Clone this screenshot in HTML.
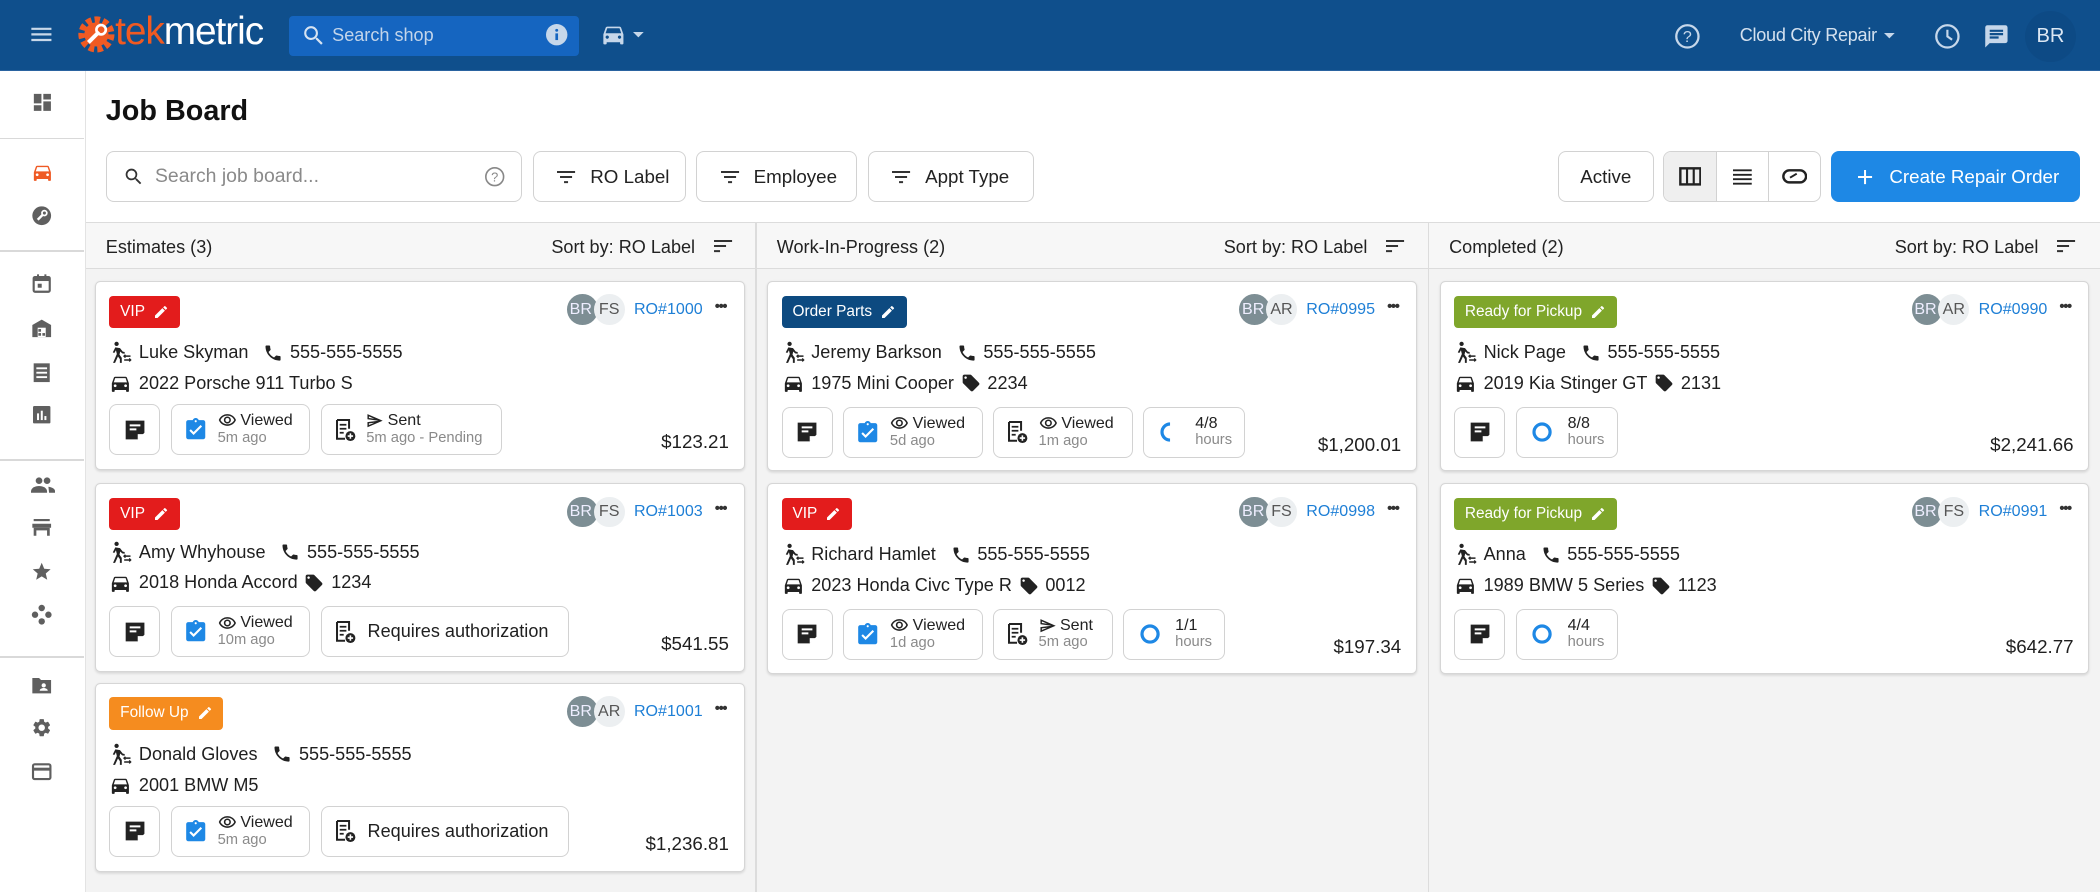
<!DOCTYPE html>
<html><head><meta charset="utf-8">
<style>
*{box-sizing:border-box;margin:0;padding:0}
html,body{width:2100px;height:892px;overflow:hidden;background:#fff}
#root{zoom:1.33929;width:1568px;height:666px;position:relative;font-family:"Liberation Sans",sans-serif;color:#1f1f1f;font-size:14px}
.hdr{position:absolute;left:0;top:0;width:1568px;height:53px;background:#0f4f8c;border-bottom:1px solid #2a63a0}
.abs{position:absolute}
svg{display:block;flex:none}
.side{position:absolute;left:0;top:53px;width:64px;height:613px;background:#fff;border-right:1px solid #e3e3e3}
.side .dv{position:absolute;left:0;width:63px;height:1px;background:#d9d9d9}
.side svg{position:absolute;left:23px}
.btn{position:absolute;top:113px;height:38px;border:1px solid #d2d2d2;border-radius:6px;background:#fff;display:flex;align-items:center;font-size:14px;color:#222;white-space:nowrap}
.colh{position:absolute;top:166px;height:35px;background:#f7f7f7;border-top:1px solid #dcdcdc;border-bottom:1px solid #dcdcdc;font-size:13.5px;color:#222}
.colb{position:absolute;top:201px;height:465px;background:#f3f3f3}
.vl{position:absolute;top:166px;height:500px;width:1px;background:#dcdcdc}
.card{position:absolute;width:485px;background:#fff;border:1px solid #d6d6d6;border-radius:4px;box-shadow:0 1px 2px rgba(0,0,0,.12)}
.tag{position:absolute;left:10px;top:10px;height:24px;border-radius:3px;color:#fff;font-size:11.5px;display:flex;align-items:center;padding:0 8px;gap:6px;white-space:nowrap}
.vip{background:#e31c1c}.op{background:#0d4a80}.rp{background:#7fa62b}.fu{background:#f58c1f}
.avs{position:absolute;top:9px;right:13px;display:flex;align-items:center}
.av{width:23px;height:23px;border-radius:50%;font-size:12px;display:flex;align-items:center;justify-content:center;color:#555}
.av.b{background:#7d8e94;color:#eef;overflow:hidden;justify-content:flex-start;padding-left:2px}
.av.f{background:#eceff1;margin-left:-3px}
.ro{color:#1e7fd6;font-size:12px;margin-left:7px}
.dots{margin-left:9px;font-weight:bold;font-size:11px;letter-spacing:-1px;color:#333;position:relative;top:-2px}
.ln{position:absolute;left:10px;display:flex;align-items:center;font-size:13.5px;color:#1f1f1f;gap:5px;white-space:nowrap}
.chips{position:absolute;left:10px;top:91px;display:flex;gap:8px}
.chip{height:38px;border:1px solid #d2d2d2;border-radius:6px;display:flex;align-items:center;padding:0 8px;gap:7px;background:#fff;white-space:nowrap;overflow:hidden}
.chip.n{width:38px;justify-content:center;padding:0}
.t1{font-size:12px;color:#222;display:flex;align-items:center;gap:3px;line-height:13px}
.t2{font-size:11px;color:#8a8a8a;line-height:13px}
.price{position:absolute;right:11px;top:111px;font-size:14px;color:#1f1f1f}
</style></head><body><div id="root">

<div class="hdr">
 <svg class="abs" style="left:21px;top:16px" width="20" height="20" viewBox="0 0 24 24"><path fill="#c9d9ea" d="M3 18h18v-2H3v2zm0-5h18v-2H3v2zm0-7v2h18V6H3z"/></svg>
 <svg class="abs" style="left:56px;top:10px" width="32" height="32" viewBox="0 0 32 32"><circle cx="16" cy="16" r="11" fill="none" stroke="#f05a22" stroke-width="5" stroke-dasharray="4 2.3"/><circle cx="16" cy="16" r="9" fill="#f05a22"/><path d="M10 22l8-8" stroke="#fff" stroke-width="3"/><circle cx="19.5" cy="12.5" r="3.5" fill="none" stroke="#fff" stroke-width="2"/></svg>
 <div class="abs" style="left:86px;top:7px;font-size:29px;letter-spacing:-0.8px;line-height:34px"><span style="color:#f05a22">tek</span><span style="color:#fff">metric</span></div>
 <div class="abs" style="left:216px;top:12px;width:216px;height:30px;background:#1565c0;border-radius:3px"></div>
 <svg class="abs" style="left:225px;top:17px" width="19" height="19" viewBox="0 0 24 24"><path fill="#d6e3f2" d="M15.5 14h-.79l-.28-.27A6.47 6.47 0 0016 9.5 6.5 6.5 0 109.5 16c1.61 0 3.09-.59 4.23-1.57l.27.28v.79l5 4.99L20.49 19l-4.99-5zm-6 0C7.01 14 5 11.990 5 9.5S7.01 5 9.5 5 14 7.01 14 9.5 11.99 14 9.5 14z"/></svg>
 <div class="abs" style="left:248px;top:19px;color:#c3d5ea;font-size:13.5px">Search shop</div>
 <svg class="abs" style="left:408px;top:18px" width="16" height="16" viewBox="0 0 16 16"><circle cx="8" cy="8" r="8" fill="#c6d7ea"/><rect x="7" y="7" width="2" height="5" fill="#1565c0"/><circle cx="8" cy="4.7" r="1.1" fill="#1565c0"/></svg>
 <svg class="abs" style="left:448px;top:16px" width="20" height="20" viewBox="0 0 24 24"><path fill="#c6d7ea" d="M18.92 6.01C18.72 5.42 18.16 5 17.5 5h-11c-.66 0-1.21.42-1.42 1.01L3 12v8c0 .55.45 1 1 1h1c.55 0 1-.45 1-1v-1h12v1c0 .55.45 1 1 1h1c.55 0 1-.45 1-1v-8l-2.08-5.99zM6.5 16c-.83 0-1.5-.67-1.5-1.5S5.67 13 6.5 13s1.5.67 1.5 1.5S7.33 16 6.5 16zm11 0c-.83 0-1.5-.67-1.5-1.5s.67-1.5 1.5-1.5 1.5.67 1.5 1.5-.67 1.5-1.5 1.5zM5 11l1.5-4.5h11L19 11H5z"/></svg>
 <svg class="abs" style="left:473px;top:24px" width="8" height="5" viewBox="0 0 8 5"><path d="M0 0h8L4 4z" fill="#c6d7ea"/></svg>
 <svg class="abs" style="left:1250px;top:17px" width="20" height="20" viewBox="0 0 20 20"><circle cx="10" cy="10" r="8.3" fill="none" stroke="#c6d7ea" stroke-width="1.7"/><text x="10" y="14.3" text-anchor="middle" font-size="12" font-family="Liberation Sans" fill="#c6d7ea">?</text></svg>
 <div class="abs" style="left:1299px;top:19px;color:#d4e1ef;font-size:13.5px;letter-spacing:-0.2px">Cloud City Repair</div>
 <svg class="abs" style="left:1407px;top:25px" width="8" height="5" viewBox="0 0 8 5"><path d="M0 0h8L4 4z" fill="#c6d7ea"/></svg>
 <svg class="abs" style="left:1444px;top:17px" width="20" height="20" viewBox="0 0 20 20"><circle cx="10" cy="10" r="8.3" fill="none" stroke="#c6d7ea" stroke-width="1.7"/><path d="M10 5v5l3.5 2.5" fill="none" stroke="#c6d7ea" stroke-width="1.6"/></svg>
 <svg class="abs" style="left:1481px;top:17px" width="20" height="20" viewBox="0 0 24 24"><path fill="#c6d7ea" d="M20 2H4c-1.1 0-1.99.9-1.99 2L2 22l4-4h14c1.1 0 2-.9 2-2V4c0-1.1-.9-2-2-2zM6 9h12v2H6V9zm8 5H6v-2h8v2zm4-6H6V6h12v2z"/></svg>
 <div class="abs" style="left:1512px;top:8px;width:38px;height:38px;border-radius:50%;background:#0d4a85;color:#dce7f3;font-size:15px;display:flex;align-items:center;justify-content:center">BR</div>
</div>

<div class="side">
 <div class="dv" style="top:50px"></div><div class="dv" style="top:134px"></div><div class="dv" style="top:290px"></div><div class="dv" style="top:437px"></div>
 <svg style="top:15px" width="17" height="17" viewBox="0 0 24 24"><path fill="#5f5f5f" d="M3 13h8V3H3v10zm0 8h8v-6H3v6zm10 0h8V11h-8v10zm0-18v6h8V3h-8z"/></svg>
 <svg style="top:67px" width="17" height="17" viewBox="0 0 24 24"><path fill="#ef5a24" d="M18.92 6.01C18.72 5.42 18.16 5 17.5 5h-11c-.66 0-1.21.42-1.42 1.01L3 12v8c0 .55.45 1 1 1h1c.55 0 1-.45 1-1v-1h12v1c0 .55.45 1 1 1h1c.55 0 1-.45 1-1v-8l-2.08-5.99zM6.5 16c-.83 0-1.5-.67-1.5-1.5S5.67 13 6.5 13s1.5.67 1.5 1.5S7.33 16 6.5 16zm11 0c-.83 0-1.5-.67-1.5-1.5s.67-1.5 1.5-1.5 1.5.67 1.5 1.5-.67 1.5-1.5 1.5zM5 11l1.5-4.5h11L19 11H5z"/></svg>
 <svg style="top:100px" width="16" height="16" viewBox="0 0 16 16"><circle cx="8" cy="8" r="7" fill="#5f5f5f"/><path d="M5 11l4-4" stroke="#fff" stroke-width="1.8"/><circle cx="10" cy="6" r="1.8" fill="none" stroke="#fff" stroke-width="1.3"/></svg>
 <svg style="top:151px" width="16" height="16" viewBox="0 0 16 16"><rect x="2" y="3" width="12" height="11" rx="1" fill="none" stroke="#5f5f5f" stroke-width="1.6"/><rect x="2" y="3" width="12" height="3" fill="#5f5f5f"/><rect x="4.5" y="1" width="1.5" height="3" fill="#5f5f5f"/><rect x="10" y="1" width="1.5" height="3" fill="#5f5f5f"/><rect x="5" y="8" width="3" height="3" fill="#5f5f5f"/></svg>
 <svg style="top:184px" width="16" height="16" viewBox="0 0 16 16"><path d="M1 6l7-4 7 4v9H1z" fill="#5f5f5f"/><rect x="5" y="8" width="6" height="7" fill="#fff"/><rect x="5.5" y="9" width="2" height="2" fill="#5f5f5f"/><rect x="5.5" y="12" width="2" height="2" fill="#5f5f5f"/><rect x="8.5" y="12" width="2" height="2" fill="#5f5f5f"/></svg>
 <svg style="top:217px" width="16" height="16" viewBox="0 0 16 16"><rect x="2" y="1" width="12" height="14" fill="#5f5f5f"/><rect x="4" y="4" width="8" height="1.4" fill="#fff"/><rect x="4" y="7.3" width="8" height="1.4" fill="#fff"/><rect x="4" y="10.6" width="8" height="1.4" fill="#fff"/></svg>
 <svg style="top:249px" width="16" height="16" viewBox="0 0 16 16"><rect x="1.5" y="1.5" width="13" height="13" rx="1" fill="#5f5f5f"/><rect x="4.5" y="7" width="1.5" height="5" fill="#fff"/><rect x="7.3" y="5" width="1.5" height="7" fill="#fff"/><rect x="10" y="9" width="1.5" height="3" fill="#fff"/></svg>
 <svg style="top:301px" width="18" height="16" viewBox="0 0 18 16"><circle cx="6" cy="5" r="2.5" fill="#5f5f5f"/><circle cx="12" cy="5" r="2.5" fill="#5f5f5f"/><path d="M0 13c0-3 4-4 6-4s6 1 6 4v1H0z" fill="#5f5f5f"/><path d="M13 9.5c2 .3 5 1.2 5 3.5v1h-4.5z" fill="#5f5f5f"/></svg>
 <svg style="top:333px" width="16" height="16" viewBox="0 0 16 16"><rect x="2" y="1.5" width="12" height="1.6" fill="#5f5f5f"/><path d="M1 5h14v3H1z" fill="#5f5f5f"/><path d="M2 8h12v6h-2v-4H4v4H2z" fill="#5f5f5f"/></svg>
 <svg style="top:366px" width="16" height="16" viewBox="0 0 24 24"><path fill="#5f5f5f" d="M12 17.27L18.18 21l-1.64-7.03L22 9.24l-7.19-.61L12 2 9.19 8.63 2 9.24l5.46 4.73L5.82 21z"/></svg>
 <svg style="top:398px" width="16" height="16" viewBox="0 0 16 16"><circle cx="8" cy="3" r="2.4" fill="#5f5f5f"/><circle cx="8" cy="13" r="2.4" fill="#5f5f5f"/><circle cx="3" cy="8" r="2.4" fill="#5f5f5f"/><circle cx="13" cy="8" r="2.4" fill="#5f5f5f"/></svg>
 <svg style="top:450px" width="16" height="16" viewBox="0 0 16 16"><path d="M1 3h5l1.5 1.5H15v10H1z" fill="#5f5f5f"/><circle cx="9.5" cy="8.5" r="1.6" fill="#fff"/><path d="M6.5 12.5c0-1.5 2-2 3-2s3 .5 3 2z" fill="#fff"/></svg>
 <svg style="top:482px" width="16" height="16" viewBox="0 0 24 24"><path fill="#5f5f5f" d="M19.14 12.94c.04-.3.06-.61.06-.94 0-.32-.02-.64-.07-.94l2.03-1.58a.49.49 0 00.12-.61l-1.92-3.32a.488.488 0 00-.59-.22l-2.39.96c-.5-.38-1.03-.7-1.62-.94l-.36-2.54a.484.484 0 00-.48-.41h-3.84c-.24 0-.43.17-.47.41l-.36 2.54c-.59.24-1.13.57-1.62.94l-2.39-.96c-.22-.08-.47 0-.59.22L2.74 8.87c-.12.21-.08.47.12.61l2.03 1.58c-.05.3-.09.63-.09.94s.02.64.07.94l-2.03 1.58a.49.49 0 00-.12.61l1.92 3.32c.12.22.37.29.59.22l2.39-.96c.5.38 1.03.7 1.62.94l.36 2.54c.05.24.24.41.48.41h3.84c.24 0 .44-.17.47-.41l.36-2.54c.59-.24 1.13-.56 1.62-.94l2.39.96c.22.08.47 0 .59-.22l1.92-3.32c.12-.22.07-.47-.12-.61l-2.01-1.58zM12 15.6c-1.98 0-3.6-1.62-3.6-3.6s1.62-3.6 3.6-3.6 3.6 1.62 3.6 3.6-1.62 3.6-3.6 3.6z"/></svg>
 <svg style="top:515px" width="16" height="16" viewBox="0 0 16 16"><rect x="1.5" y="2.5" width="13" height="11" rx="1.2" fill="none" stroke="#5f5f5f" stroke-width="1.6"/><rect x="1.5" y="5" width="13" height="2.2" fill="#5f5f5f"/></svg>
</div>

<div class="abs" style="left:79px;top:71px;font-size:21.5px;font-weight:bold;color:#111">Job Board</div>
<div class="btn" style="left:79px;width:311px">
 <svg style="margin-left:12px" width="16" height="16" viewBox="0 0 24 24"><path fill="#333" d="M15.5 14h-.79l-.28-.27A6.47 6.47 0 0016 9.5 6.5 6.5 0 109.5 16c1.61 0 3.09-.59 4.23-1.570l.27.28v.79l5 4.99L20.49 19l-4.99-5zm-6 0C7.01 14 5 11.99 5 9.5S7.01 5 9.5 5 14 7.01 14 9.5 11.99 14 9.5 14z"/></svg>
 <span style="margin-left:8px;color:#8a8a8a;font-size:14.5px">Search job board...</span>
 <svg style="position:absolute;right:12px" width="16" height="16" viewBox="0 0 20 20"><circle cx="10" cy="10" r="8.3" fill="none" stroke="#888" stroke-width="1.5"/><text x="10" y="14.3" text-anchor="middle" font-size="12" font-family="Liberation Sans" fill="#888">?</text></svg>
</div>
<div class="btn" style="left:398px;width:114px"><svg style="margin-left:15px" width="18" height="18" viewBox="0 0 24 24"><path fill="#333" d="M10 18h4v-2h-4v2zM3 6v2h18V6H3zm3 7h12v-2H6v2z"/></svg><span style="margin-left:9px">RO Label</span></div>
<div class="btn" style="left:520px;width:120px"><svg style="margin-left:15px" width="18" height="18" viewBox="0 0 24 24"><path fill="#333" d="M10 18h4v-2h-4v2zM3 6v2h18V6H3zm3 7h12v-2H6v2z"/></svg><span style="margin-left:9px">Employee</span></div>
<div class="btn" style="left:648px;width:124px"><svg style="margin-left:15px" width="18" height="18" viewBox="0 0 24 24"><path fill="#333" d="M10 18h4v-2h-4v2zM3 6v2h18V6H3zm3 7h12v-2H6v2z"/></svg><span style="margin-left:9px">Appt Type</span></div>
<div class="btn" style="left:1163px;width:72px;justify-content:center">Active</div>
<div class="btn" style="left:1242px;width:118px;overflow:hidden">
 <div style="width:39px;height:100%;background:#efefef;border-right:1px solid #d2d2d2;display:flex;align-items:center;justify-content:center"><svg width="17" height="14" viewBox="0 0 17 14"><rect x="1" y="1" width="15" height="12" fill="none" stroke="#222" stroke-width="1.8"/><path d="M6 1v12M11 1v12" stroke="#222" stroke-width="1.6"/></svg></div>
 <div style="width:39px;height:100%;border-right:1px solid #d2d2d2;display:flex;align-items:center;justify-content:center"><svg width="14" height="12" viewBox="0 0 14 12"><path d="M0 1h14M0 4.3h14M0 7.6h14M0 11h14" stroke="#222" stroke-width="1.4"/></svg></div>
 <div style="flex:1;height:100%;display:flex;align-items:center;justify-content:center"><svg width="19" height="11" viewBox="0 0 19 11"><rect x="1" y="1" width="17" height="9" rx="4.5" fill="none" stroke="#222" stroke-width="1.8"/><path d="M6 6.5l5-3" stroke="#222" stroke-width="1.5"/></svg></div>
</div>
<div class="btn" style="left:1367px;width:186px;background:#1e88e5;border-color:#1e88e5;color:#fff;font-size:14px"><svg style="margin-left:16px" width="18" height="18" viewBox="0 0 24 24"><path fill="#fff" d="M19 13h-6v6h-2v-6H5v-2h6V5h2v6h6v2z"/></svg><span style="margin-left:9px">Create Repair Order</span></div>

<div class="colb" style="left:64px;width:501px"></div>
<div class="colb" style="left:565px;width:502px"></div>
<div class="colb" style="left:1067px;width:501px"></div>
<div class="colh" style="left:64px;width:501px"><span class="abs" style="left:15px;top:10px">Estimates (3)</span><span class="abs" style="right:46px;top:10px">Sort by: RO Label</span><svg class="abs" style="right:16px;top:8px" width="18" height="18" viewBox="0 0 24 24"><path fill="#333" d="M3 18h6v-2H3v2zM3 6v2h18V6H3zm0 7h12v-2H3v2z"/></svg></div>
<div class="colh" style="left:565px;width:502px"><span class="abs" style="left:15px;top:10px">Work-In-Progress (2)</span><span class="abs" style="right:46px;top:10px">Sort by: RO Label</span><svg class="abs" style="right:16px;top:8px" width="18" height="18" viewBox="0 0 24 24"><path fill="#333" d="M3 18h6v-2H3v2zM3 6v2h18V6H3zm0 7h12v-2H3v2z"/></svg></div>
<div class="colh" style="left:1067px;width:501px"><span class="abs" style="left:15px;top:10px">Completed (2)</span><span class="abs" style="right:46px;top:10px">Sort by: RO Label</span><svg class="abs" style="right:16px;top:8px" width="18" height="18" viewBox="0 0 24 24"><path fill="#333" d="M3 18h6v-2H3v2zM3 6v2h18V6H3zm0 7h12v-2H3v2z"/></svg></div>
<div class="vl" style="left:564px"></div><div class="vl" style="left:1066px"></div>

<svg width="0" height="0" style="position:absolute">
 <defs>
  <symbol id="walk" viewBox="0 0 18 18"><circle cx="6" cy="2.3" r="1.7" fill="#222"/><path d="M5 5l-2 4 1.2.5 1.3-2.2.7 3-3 7h1.6l2.3-5 1.5 2v3h1.5v-4l-1.8-2.5.6-2.5 1.5 1.5 2 .3v-1.4l-1.5-.3-2.2-2.8z" fill="#222"/><path d="M12 12h5M12 15h5" stroke="#222" stroke-width="1.2"/><path d="M13 10.8l-1.2 1.2 1.2 1.2M16 13.8l1.2 1.2-1.2 1.2" fill="none" stroke="#222" stroke-width="1"/></symbol>
  <symbol id="phone" viewBox="0 0 24 24"><path fill="#222" d="M6.62 10.79c1.44 2.83 3.76 5.14 6.59 6.59l2.2-2.2c.27-.27.67-.36 1.02-.24 1.12.37 2.33.57 3.57.57.55 0 1 .45 1 1V20c0 .55-.45 1-1 1-9.39 0-17-7.61-17-17 0-.55.45-1 1-1h3.5c.55 0 1 .45 1 1 0 1.25.2 2.45.57 3.57.11.35.03.74-.25 1.02l-2.2 2.2z"/></symbol>
  <symbol id="car" viewBox="0 0 24 24"><path fill="#222" d="M18.92 6.01C18.72 5.42 18.16 5 17.5 5h-11c-.66 0-1.21.42-1.42 1.01L3 12v8c0 .55.45 1 1 1h1c.55 0 1-.45 1-1v-1h12v1c0 .55.45 1 1 1h1c.55 0 1-.45 1-1v-8l-2.08-5.99zM6.5 16c-.83 0-1.5-.67-1.5-1.5S5.67 13 6.5 13s1.5.67 1.5 1.5S7.33 16 6.5 16zm11 0c-.83 0-1.5-.67-1.5-1.5s.67-1.5 1.5-1.5 1.5.67 1.5 1.5-.67 1.5-1.5 1.5zM5 11l1.5-4.5h11L19 11H5z"/></symbol>
  <symbol id="tagi" viewBox="0 0 24 24"><path fill="#222" d="M21.41 11.58l-9-9C12.05 2.22 11.55 2 11 2H4c-1.1 0-2 .9-2 2v7c0 .55.22 1.05.59 1.42l9 9c.36.36.86.58 1.41.58s1.05-.22 1.41-.59l7-7c.37-.36.59-.86.59-1.41s-.23-1.06-.59-1.42zM5.5 7C4.67 7 4 6.33 4 5.5S4.67 4 5.5 4 7 4.67 7 5.5 6.33 7 5.5 7z"/></symbol>
  <symbol id="edit" viewBox="0 0 24 24"><path fill="#fff" d="M3 17.25V21h3.75L17.81 9.94l-3.75-3.75L3 17.25zM20.71 7.04a1 1 0 000-1.41l-2.34-2.34a1 1 0 00-1.41 0l-1.83 1.83 3.75 3.75 1.83-1.83z"/></symbol>
  <symbol id="note" viewBox="0 0 18 18"><path d="M2 2h14v9l-5 5H2z" fill="#222"/><path d="M5 5.5h8M5 8.5h5" stroke="#fff" stroke-width="1.5"/><path d="M11 16v-4h5" fill="#fff"/></symbol>
  <symbol id="clip" viewBox="0 0 24 24"><path fill="#1e88e5" d="M19 3h-4.18C14.4 1.84 13.3 1 12 1c-1.3 0-2.4.84-2.82 2H5c-1.1 0-2 .9-2 2v14c0 1.1.9 2 2 2h14c1.1 0 2-.9 2-2V5c0-1.1-.9-2-2-2zm-7 0c.55 0 1 .45 1 1s-.45 1-1 1-1-.45-1-1 .45-1 1-1zm-2 14l-4-4 1.41-1.41L10 14.17l6.59-6.59L18 9l-8 8z"/></symbol>
  <symbol id="doc" viewBox="0 0 18 18"><path d="M3 1.5h9v6.5M3 1.5v14h6" fill="none" stroke="#222" stroke-width="1.5"/><path d="M5 5h5M5 8h5M5 11h3" stroke="#222" stroke-width="1.3"/><circle cx="13" cy="13.5" r="3.7" fill="#222"/><path d="M13 11.5v4M11 13.5h4" stroke="#fff" stroke-width="1.2"/></symbol>
  <symbol id="eye" viewBox="0 0 24 24"><path fill="#222" d="M12 6a9.77 9.77 0 018.82 5.5C19.17 14.87 15.79 17 12 17s-7.17-2.13-8.82-5.5A9.77 9.77 0 0112 6m0-2C7 4 2.73 7.11 1 11.5 2.73 15.89 7 19 12 19s9.27-3.11 11-7.5C21.27 7.11 17 4 12 4zm0 5a2.5 2.5 0 010 5 2.5 2.5 0 010-5m0-2c-2.48 0-4.5 2.02-4.5 4.5S9.52 16 12 16s4.5-2.02 4.5-4.5S14.48 7 12 7z"/></symbol>
  <symbol id="send" viewBox="0 0 24 24"><path fill="#222" d="M4.01 6.03l7.51 3.22-7.52-1 .01-2.22m7.5 8.72L4 17.97v-2.22l7.51-1M2.01 3L2 10l15 2-15 2 .01 7L23 12 2.01 3z"/></symbol>
 </defs>
</svg>

<div class="card" style="left:71px;top:210px;height:141px">
 <div class="tag vip">VIP<svg width="12" height="12"><use href="#edit"/></svg></div>
 <div class="avs"><span class="av b">BR</span><span class="av f">FS</span><span class="ro">RO#1000</span><span class="dots">•••</span></div>
 <div class="ln" style="top:44px"><svg width="17" height="17"><use href="#walk"/></svg><span>Luke Skyman</span><svg style="margin-left:6px" width="15" height="15"><use href="#phone"/></svg><span>555-555-5555</span></div>
 <div class="ln" style="top:67px"><svg width="17" height="17"><use href="#car"/></svg><span>2022 Porsche 911 Turbo S</span></div>
 <div class="chips"><div class="chip n"><svg width="18" height="18"><use href="#note"/></svg></div><div class="chip" style="width:104px"><svg width="19" height="19"><use href="#clip"/></svg><div><div class="t1"><svg width="14" height="14"><use href="#eye"/></svg>Viewed</div><div class="t2">5m ago</div></div></div><div class="chip" style="width:135px"><svg width="18" height="18"><use href="#doc"/></svg><div><div class="t1"><svg width="13" height="13"><use href="#send"/></svg>Sent</div><div class="t2">5m ago - Pending</div></div></div></div>
 <div class="price">$123.21</div>
</div>
<div class="card" style="left:71px;top:361px;height:141px">
 <div class="tag vip">VIP<svg width="12" height="12"><use href="#edit"/></svg></div>
 <div class="avs"><span class="av b">BR</span><span class="av f">FS</span><span class="ro">RO#1003</span><span class="dots">•••</span></div>
 <div class="ln" style="top:42px"><svg width="17" height="17"><use href="#walk"/></svg><span>Amy Whyhouse</span><svg style="margin-left:6px" width="15" height="15"><use href="#phone"/></svg><span>555-555-5555</span></div>
 <div class="ln" style="top:65px"><svg width="17" height="17"><use href="#car"/></svg><span>2018 Honda Accord</span><svg width="15" height="15"><use href="#tagi"/></svg><span>1234</span></div>
 <div class="chips"><div class="chip n"><svg width="18" height="18"><use href="#note"/></svg></div><div class="chip" style="width:104px"><svg width="19" height="19"><use href="#clip"/></svg><div><div class="t1"><svg width="14" height="14"><use href="#eye"/></svg>Viewed</div><div class="t2">10m ago</div></div></div><div class="chip" style="width:185px;gap:8px"><svg width="18" height="18"><use href="#doc"/></svg><span style="font-size:13.5px">Requires authorization</span></div></div>
 <div class="price">$541.55</div>
</div>
<div class="card" style="left:71px;top:510px;height:141px">
 <div class="tag fu">Follow Up<svg width="12" height="12"><use href="#edit"/></svg></div>
 <div class="avs"><span class="av b">BR</span><span class="av f">AR</span><span class="ro">RO#1001</span><span class="dots">•••</span></div>
 <div class="ln" style="top:44px"><svg width="17" height="17"><use href="#walk"/></svg><span>Donald Gloves</span><svg style="margin-left:6px" width="15" height="15"><use href="#phone"/></svg><span>555-555-5555</span></div>
 <div class="ln" style="top:67px"><svg width="17" height="17"><use href="#car"/></svg><span>2001 BMW M5</span></div>
 <div class="chips"><div class="chip n"><svg width="18" height="18"><use href="#note"/></svg></div><div class="chip" style="width:104px"><svg width="19" height="19"><use href="#clip"/></svg><div><div class="t1"><svg width="14" height="14"><use href="#eye"/></svg>Viewed</div><div class="t2">5m ago</div></div></div><div class="chip" style="width:185px;gap:8px"><svg width="18" height="18"><use href="#doc"/></svg><span style="font-size:13.5px">Requires authorization</span></div></div>
 <div class="price">$1,236.81</div>
</div>

<div class="card" style="left:573px;top:210px;height:142px">
 <div class="tag op">Order Parts<svg width="12" height="12"><use href="#edit"/></svg></div>
 <div class="avs"><span class="av b">BR</span><span class="av f">AR</span><span class="ro">RO#0995</span><span class="dots">•••</span></div>
 <div class="ln" style="top:44px"><svg width="17" height="17"><use href="#walk"/></svg><span>Jeremy Barkson</span><svg style="margin-left:6px" width="15" height="15"><use href="#phone"/></svg><span>555-555-5555</span></div>
 <div class="ln" style="top:67px"><svg width="17" height="17"><use href="#car"/></svg><span>1975 Mini Cooper</span><svg width="15" height="15"><use href="#tagi"/></svg><span>2234</span></div>
 <div class="chips" style="top:93px"><div class="chip n"><svg width="18" height="18"><use href="#note"/></svg></div><div class="chip" style="width:104px"><svg width="19" height="19"><use href="#clip"/></svg><div><div class="t1"><svg width="14" height="14"><use href="#eye"/></svg>Viewed</div><div class="t2">5d ago</div></div></div><div class="chip" style="width:104px"><svg width="18" height="18"><use href="#doc"/></svg><div><div class="t1"><svg width="14" height="14"><use href="#eye"/></svg>Viewed</div><div class="t2">1m ago</div></div></div><div class="chip" style="width:76px;gap:10px;padding-left:10px"><svg width="18" height="18" viewBox="0 0 18 18"><path d="M9 3a6 6 0 000 12" fill="none" stroke="#1e88e5" stroke-width="2.4"/></svg><div><div class="t1">4/8</div><div class="t2">hours</div></div></div></div>
 <div class="price" style="top:113px">$1,200.01</div>
</div>
<div class="card" style="left:573px;top:361px;height:142px">
 <div class="tag vip">VIP<svg width="12" height="12"><use href="#edit"/></svg></div>
 <div class="avs"><span class="av b">BR</span><span class="av f">FS</span><span class="ro">RO#0998</span><span class="dots">•••</span></div>
 <div class="ln" style="top:44px"><svg width="17" height="17"><use href="#walk"/></svg><span>Richard Hamlet</span><svg style="margin-left:6px" width="15" height="15"><use href="#phone"/></svg><span>555-555-5555</span></div>
 <div class="ln" style="top:67px"><svg width="17" height="17"><use href="#car"/></svg><span>2023 Honda Civc Type R</span><svg width="15" height="15"><use href="#tagi"/></svg><span>0012</span></div>
 <div class="chips" style="top:93px"><div class="chip n"><svg width="18" height="18"><use href="#note"/></svg></div><div class="chip" style="width:104px"><svg width="19" height="19"><use href="#clip"/></svg><div><div class="t1"><svg width="14" height="14"><use href="#eye"/></svg>Viewed</div><div class="t2">1d ago</div></div></div><div class="chip" style="width:89px"><svg width="18" height="18"><use href="#doc"/></svg><div><div class="t1"><svg width="13" height="13"><use href="#send"/></svg>Sent</div><div class="t2">5m ago</div></div></div><div class="chip" style="width:76px;gap:10px;padding-left:10px"><svg width="18" height="18" viewBox="0 0 18 18"><circle cx="9" cy="9" r="6" fill="none" stroke="#1e88e5" stroke-width="2.4"/></svg><div><div class="t1">1/1</div><div class="t2">hours</div></div></div></div>
 <div class="price" style="top:113px">$197.34</div>
</div>

<div class="card" style="left:1075px;top:210px;height:142px">
 <div class="tag rp">Ready for Pickup<svg width="12" height="12"><use href="#edit"/></svg></div>
 <div class="avs"><span class="av b">BR</span><span class="av f">AR</span><span class="ro">RO#0990</span><span class="dots">•••</span></div>
 <div class="ln" style="top:44px"><svg width="17" height="17"><use href="#walk"/></svg><span>Nick Page</span><svg style="margin-left:6px" width="15" height="15"><use href="#phone"/></svg><span>555-555-5555</span></div>
 <div class="ln" style="top:67px"><svg width="17" height="17"><use href="#car"/></svg><span>2019 Kia Stinger GT</span><svg width="15" height="15"><use href="#tagi"/></svg><span>2131</span></div>
 <div class="chips" style="top:93px"><div class="chip n"><svg width="18" height="18"><use href="#note"/></svg></div><div class="chip" style="width:76px;gap:10px;padding-left:10px"><svg width="18" height="18" viewBox="0 0 18 18"><circle cx="9" cy="9" r="6" fill="none" stroke="#1e88e5" stroke-width="2.4"/></svg><div><div class="t1">8/8</div><div class="t2">hours</div></div></div></div>
 <div class="price" style="top:113px">$2,241.66</div>
</div>
<div class="card" style="left:1075px;top:361px;height:142px">
 <div class="tag rp">Ready for Pickup<svg width="12" height="12"><use href="#edit"/></svg></div>
 <div class="avs"><span class="av b">BR</span><span class="av f">FS</span><span class="ro">RO#0991</span><span class="dots">•••</span></div>
 <div class="ln" style="top:44px"><svg width="17" height="17"><use href="#walk"/></svg><span>Anna</span><svg style="margin-left:6px" width="15" height="15"><use href="#phone"/></svg><span>555-555-5555</span></div>
 <div class="ln" style="top:67px"><svg width="17" height="17"><use href="#car"/></svg><span>1989 BMW 5 Series</span><svg width="15" height="15"><use href="#tagi"/></svg><span>1123</span></div>
 <div class="chips" style="top:93px"><div class="chip n"><svg width="18" height="18"><use href="#note"/></svg></div><div class="chip" style="width:76px;gap:10px;padding-left:10px"><svg width="18" height="18" viewBox="0 0 18 18"><circle cx="9" cy="9" r="6" fill="none" stroke="#1e88e5" stroke-width="2.4"/></svg><div><div class="t1">4/4</div><div class="t2">hours</div></div></div></div>
 <div class="price" style="top:113px">$642.77</div>
</div>

</div></body></html>
